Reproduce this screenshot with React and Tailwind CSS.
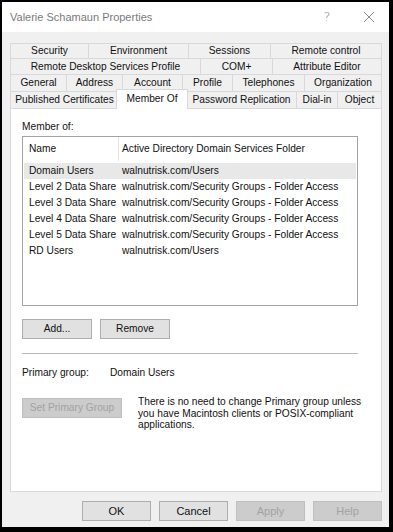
import React from 'react'

const tabRows = [
  { h: 'h-[15px]', tabs: [['Security', 'w-[78px]'], ['Environment', 'w-[100px]'], ['Sessions', 'w-[82px]'], ['Remote control', 'w-[112px]']] },
  { h: 'h-[16px]', tabs: [['Remote Desktop Services Profile', 'w-[190px]'], ['COM+', 'w-[72px]'], ['Attribute Editor', 'w-[110px]']] },
  { h: 'h-[17px]', tabs: [['General', 'w-[56px]'], ['Address', 'w-[56px]'], ['Account', 'w-[60px]'], ['Profile', 'w-[50px]'], ['Telephones', 'w-[72px]'], ['Organization', 'w-[78px]']] },
]

const groups = [
  ['Domain Users', 'walnutrisk.com/Users'],
  ['Level 2 Data Share', 'walnutrisk.com/Security Groups - Folder Access'],
  ['Level 3 Data Share', 'walnutrisk.com/Security Groups - Folder Access'],
  ['Level 4 Data Share', 'walnutrisk.com/Security Groups - Folder Access'],
  ['Level 5 Data Share', 'walnutrisk.com/Security Groups - Folder Access'],
  ['RD Users', 'walnutrisk.com/Users'],
]

function Btn({ children, disabled, className = '' }){
  return (
    <div className={`h-[20px] flex items-center justify-center border ${disabled ? 'bg-[#cccccc] border-[#bfbfbf] text-[#a2a2a2]' : 'bg-[#e1e1e1] border-[#adadad] text-[#111]'} ${className}`}>
      {children}
    </div>
  )
}

export default function App(){
  return (
    <div className="w-[393px] h-[532px] bg-black pt-[2px] pl-[2px] pr-[4px] pb-[5px] font-['Liberation_Sans',Arial,sans-serif] text-[10.2px] text-[#111]">
      <div className="h-full bg-[#f0f0f0] flex flex-col">
        {/* title bar */}
        <div className="h-[30px] bg-white flex items-center pl-[8px] shrink-0">
          <span className="text-[11px] text-[#7a7a7a]">Valerie Schamaun Properties</span>
          <span className="ml-auto w-[20px] text-center text-[13px] text-[#8a8a8a] font-['DejaVu_Sans',sans-serif] font-light">?</span>
          <svg className="ml-[26px] mr-[14px]" width="12" height="12" viewBox="0 0 12 12">
            <path d="M1 1 L11 11 M11 1 L1 11" stroke="#8a8a8a" strokeWidth="1" fill="none" />
          </svg>
        </div>

        <div className="pl-[8px] pr-[7px] pt-[11px] flex flex-col">
          {/* tabs */}
          <div className="w-[372px]">
            {tabRows.map((row, i) => (
              <div key={i} className={`flex ${row.h}`}>
                {row.tabs.map(([label, w], j) => (
                  <div key={label} className={`${w} border-t border-l ${j === row.tabs.length - 1 ? 'border-r' : ''} border-[#d9d9d9] flex items-center justify-center whitespace-nowrap`}>
                    {label}
                  </div>
                ))}
              </div>
            ))}
            <div className="flex h-[17px]">
              <div className="w-[108px] border-t border-l border-[#d9d9d9] flex items-center justify-center whitespace-nowrap">Published Certificates</div>
              <div className="relative z-10 -top-[2px] w-[72px] -mx-[2px] h-[20px] bg-white border-t border-l border-r border-[#d9d9d9] flex items-center justify-center pb-[2px]">Member Of</div>
              <div className="w-[110px] border-t border-l border-[#d9d9d9] flex items-center justify-center whitespace-nowrap">Password Replication</div>
              <div className="w-[41px] border-t border-l border-[#d9d9d9] flex items-center justify-center">Dial-in</div>
              <div className="w-[45px] border-t border-l border-r border-[#d9d9d9] flex items-center justify-center">Object</div>
            </div>
          </div>

          {/* panel */}
          <div className="w-[372px] h-[384px] bg-white border border-[#d9d9d9] pl-[11px] pt-[12px]">
            <div className="leading-[12px]">Member of:</div>
            <div className="mt-[3px] w-[336px] h-[170px] border border-[#a3a3a3] flex flex-col">
              <div className="h-[24px] flex items-center">
                <div className="w-[95px] pl-[6px]">Name</div>
                <div className="w-px h-full bg-[#e5e5e5]" />
                <div className="pl-[3px]">Active Directory Domain Services Folder</div>
              </div>
              <div className="mt-[2px] px-[1px]">
                {groups.map(([name, folder], i) => (
                  <div key={name} className={`h-[16px] flex items-center ${i === 0 ? 'bg-[#e8e8e8]' : ''}`}>
                    <div className="w-[98px] pl-[5px] whitespace-nowrap">{name}</div>
                    <div className="whitespace-nowrap">{folder}</div>
                  </div>
                ))}
              </div>
            </div>

            <div className="mt-[13px] flex gap-[8px]">
              <Btn className="w-[70px]">Add...</Btn>
              <Btn className="w-[70px]">Remove</Btn>
            </div>

            <div className="mt-[14px] w-[336px] h-px bg-[#b9b9b9]" />

            <div className="mt-[13px] flex leading-[12px]">
              <div className="w-[88px]">Primary group:</div>
              <div>Domain Users</div>
            </div>

            <div className="mt-[17px] flex items-start">
              <Btn disabled className="w-[100px] mt-[2px]">Set Primary Group</Btn>
              <div className="ml-[16px] leading-[11.5px]">
                There is no need to change Primary group unless<br />
                you have Macintosh clients or POSIX-compliant<br />
                applications.
              </div>
            </div>
          </div>

          {/* dialog buttons */}
          <div className="mt-[9px] flex justify-end gap-[8px]">
            <Btn className="w-[69px] text-[11px]">OK</Btn>
            <Btn className="w-[69px] text-[11px]">Cancel</Btn>
            <Btn disabled className="w-[69px] text-[11px]">Apply</Btn>
            <Btn disabled className="w-[69px] text-[11px]">Help</Btn>
          </div>
        </div>
      </div>
    </div>
  )
}
